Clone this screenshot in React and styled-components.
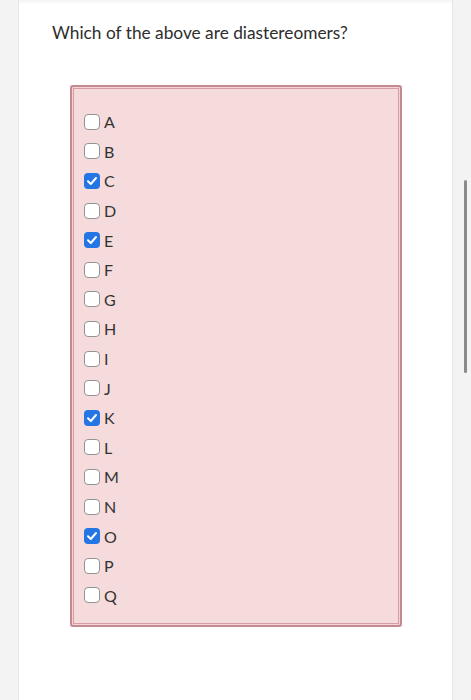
import React from 'react'
import styled, { createGlobalStyle } from 'styled-components'

const GlobalStyle = createGlobalStyle`
  html, body { margin: 0; padding: 0; background: #f3f3f3; }
  body { font-family: Lato, "Liberation Sans", sans-serif; }
`

const Page = styled.div`
  display: flex;
  height: 700px;
  overflow: hidden;
`
const Gutter = styled.div`
  width: ${(p) => p.w}px;
  flex: none;
  background: #f3f3f3;
  border-${(p) => p.side}: 1px solid #e6e6e6;
  display: flex;
  justify-content: center;
  padding-top: 180px;
  box-sizing: border-box;
`
const ScrollThumb = styled.div`
  width: 3px;
  height: 193px;
  background: #8a8a8a;
  border-radius: 2px;
  margin-left: 6px;
`
const Panel = styled.div`
  flex: 1;
  background: #fff;
  padding: 22px 0 0 33px;
  box-shadow: inset 0 5px 5px -4px rgba(0, 0, 0, 0.08);
`
const Question = styled.p`
  margin: 0;
  font-size: 17.3px;
  color: #2d2d2d;
`
const AnswerBox = styled.div`
  margin: 42px 0 0 18px;
  width: 332px;
  height: 542px;
  box-sizing: border-box;
  background: #f5dbdc;
  border: 2px solid #c48a8f;
  border-radius: 3px;
  box-shadow: inset 0 0 0 1px #f2d4d6, inset 0 0 0 2px #d59ca1;
  padding: 20px 0 0 12px;
`
const Option = styled.label`
  display: flex;
  align-items: center;
  height: 29.6px;
  font-size: 16px;
  color: #333;
`
const Box = styled.span`
  width: 16px;
  height: 16px;
  box-sizing: border-box;
  border-radius: 4px;
  margin-right: 4px;
  display: flex;
  align-items: center;
  justify-content: center;
  background: ${(p) => (p.checked ? '#2476e4' : '#fff')};
  border: ${(p) => (p.checked ? 'none' : '1.5px solid #949494')};
`

const letters = 'ABCDEFGHIJKLMNOPQ'.split('')
const picked = ['C', 'E', 'K', 'O']

const Check = () => (
  <svg width="12" height="12" viewBox="0 0 12 12">
    <path d="M2 6.3 L4.8 9 L10 3" fill="none" stroke="#fff" strokeWidth="2" strokeLinecap="round" strokeLinejoin="round" />
  </svg>
)

const App = () => {
  return (
    <Page>
      <GlobalStyle />
      <Gutter w={19} side="right" />
      <Panel>
        <Question>Which of the above are diastereomers?</Question>
        <AnswerBox>
          {letters.map((l) => {
            const on = picked.includes(l)
            return (
              <Option key={l}>
                <Box checked={on}>{on && <Check />}</Box>
                {l}
              </Option>
            )
          })}
        </AnswerBox>
      </Panel>
      <Gutter w={19} side="left">
        <ScrollThumb />
      </Gutter>
    </Page>
  )
}

export default App
